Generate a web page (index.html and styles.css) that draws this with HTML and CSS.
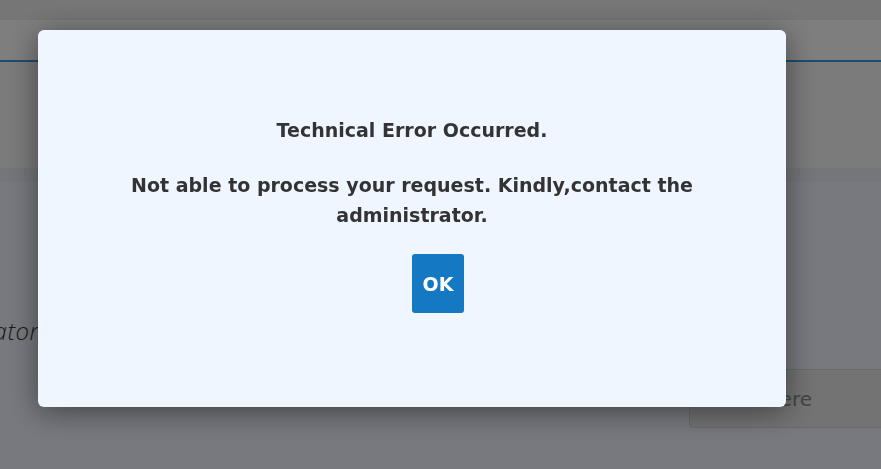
FILE: index.html
```html
<!DOCTYPE html>
<html lang="en">
<head>
<meta charset="utf-8">
<title>Technical Error</title>
<link rel="stylesheet" href="styles.css">
</head>
<body>
<div class="page">
  <div class="topbar"></div>
  <div class="nav"></div>
  <div class="nav-line"></div>
  <div class="banner"></div>
  <div class="subbar"></div>
  <div class="content">
    <div class="row">
      <p class="label">Name of the administrator</p>
    </div>
    <div class="row row-right">
      <input class="field" type="text" placeholder="Enter here">
    </div>
  </div>
</div>

<div class="overlay">
  <div class="modal" role="dialog">
    <p class="title">Technical Error Occurred.</p>
    <p class="message">Not able to process your request. Kindly,contact the administrator.</p>
    <div class="actions">
      <button class="ok" type="button">OK</button>
    </div>
  </div>
</div>
</body>
</html>
```

FILE: styles.css
```css
html, body {
  margin: 0;
  padding: 0;
  height: 100%;
  overflow: hidden;
}
body {
  font-family: "DejaVu Sans", "Noto Sans", sans-serif;
  background: #eef2fa;
}
.page {
  display: flex;
  flex-direction: column;
  height: 100%;
}
.topbar {
  height: 20px;
  background: #ececec;
}
.nav {
  height: 40px;
  background: #fcfcfc;
}
.nav-line {
  height: 2px;
  background: #3c9ae0;
}
.banner {
  height: 106px;
  background: #f6f6f6;
}
.subbar {
  height: 14px;
  background: #e8ecf2;
}
.content {
  flex: 1;
  background: #eef2fc;
  display: flex;
  flex-direction: column;
}
.row {
  display: flex;
}
.label {
  margin: 132px 0 0 -250px;
  font-family: "Open Sans", sans-serif;
  font-size: 24px;
  font-style: italic;
  font-weight: 300;
  letter-spacing: 0.5px;
  color: #333;
  white-space: nowrap;
}
.row-right {
  justify-content: flex-end;
  margin-top: 22px;
}
.field {
  width: 202px;
  height: 59px;
  margin-right: -10px;
  box-sizing: border-box;
  border: 1px solid #d4d4d4;
  border-radius: 4px;
  background: #e6e6e6;
  padding: 0 0 0 17px;
  font-family: "DejaVu Sans", sans-serif;
  font-size: 20px;
  color: #333;
}
.field::placeholder {
  color: #8a8a8a;
}
.overlay {
  position: fixed;
  inset: 0;
  background: rgba(0, 0, 0, 0.5);
  display: flex;
  align-items: flex-start;
  padding: 30px 0 0 38px;
}
.modal {
  width: 748px;
  height: 377px;
  box-sizing: border-box;
  background: #eff6ff;
  border-radius: 6px;
  box-shadow: 0 5px 30px rgba(0, 0, 0, 0.45);
  display: flex;
  flex-direction: column;
  align-items: center;
  padding: 85px 80px 0;
  color: #333;
  text-align: center;
  font-weight: 700;
  font-size: 19px;
}
.title {
  margin: 0;
  line-height: 30px;
}
.message {
  margin: 25px 0 0;
  line-height: 30px;
  max-width: 588px;
}
.actions {
  align-self: stretch;
  display: flex;
  padding-left: 50%;
  margin-top: 24px;
}
.ok {
  width: 52px;
  height: 59px;
  border: none;
  border-radius: 3px;
  background: #1479c2;
  color: #fff;
  font-family: inherit;
  font-weight: 700;
  font-size: 19px;
  padding: 0;
}
```
